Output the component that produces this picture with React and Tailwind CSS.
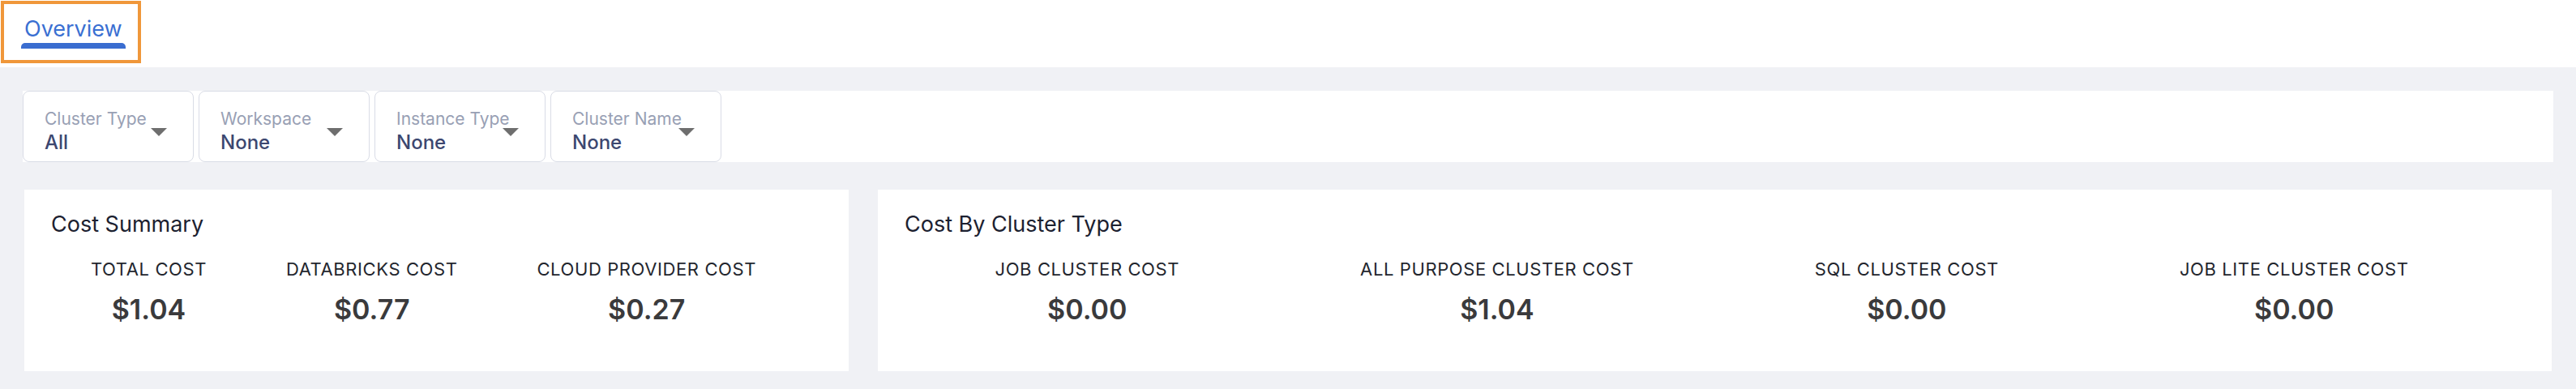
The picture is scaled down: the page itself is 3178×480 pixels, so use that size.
import React from 'react'

const filters = [
  { label: 'Cluster Type', value: 'All' },
  { label: 'Workspace', value: 'None' },
  { label: 'Instance Type', value: 'None' },
  { label: 'Cluster Name', value: 'None' },
]

const summary = [
  { label: 'TOTAL COST', value: '$1.04' },
  { label: 'DATABRICKS COST', value: '$0.77' },
  { label: 'CLOUD PROVIDER COST', value: '$0.27' },
]

const byCluster = [
  { label: 'JOB CLUSTER COST', value: '$0.00' },
  { label: 'ALL PURPOSE CLUSTER COST', value: '$1.04' },
  { label: 'SQL CLUSTER COST', value: '$0.00' },
  { label: 'JOB LITE CLUSTER COST', value: '$0.00' },
]

function FilterSelect({ label, value }) {
  return (
    <div className="w-[211px] h-[88px] border border-[#d9dce6] rounded-[8px] bg-white flex justify-between pl-[26px] pr-[32px] pt-[21px]">
      <div className="flex flex-col min-w-0">
        <span className="text-[21px] leading-[26px] text-[#98a0b4] whitespace-nowrap">{label}</span>
        <span className="text-[24px] leading-[28px] mt-[2px] text-[#3c4770] font-medium">{value}</span>
      </div>
      <span className="mt-[24px] w-0 h-0 border-l-[10px] border-r-[10px] border-t-[10px] border-l-transparent border-r-transparent border-t-[#6e6e6e] shrink-0" />
    </div>
  )
}

function CostCard({ title, items, className }) {
  return (
    <div className={`bg-white h-[224px] pl-[33px] pr-[31px] pt-[26px] ${className}`}>
      <h2 className="text-[27px] leading-[34px] text-[#1c2130]">{title}</h2>
      <div className="flex justify-around pr-[34px] mt-[24px]">
        {items.map((item) => (
          <div key={item.label} className="flex flex-col items-center">
            <span className="text-[22px] leading-[28px] tracking-[0.6px] text-[#23262e]">{item.label}</span>
            <span className="text-[34px] leading-[40px] mt-[16px] font-semibold text-[#3a3a3c]">{item.value}</span>
          </div>
        ))}
      </div>
    </div>
  )
}

export default function App() {
  return (
    <div className="min-h-screen bg-[#f0f1f5] font-['Inter',sans-serif]">
      {/* Tabs */}
      <div className="h-[83px] bg-white pt-px pl-px">
        <div className="w-[173px] h-[77px] border-4 border-[#f0973a] pt-[15px] pl-[21px]">
          <div className="inline-flex flex-col items-stretch">
            <span className="px-[4px] text-[27px] leading-[32px] text-[#3a6fd2]">Overview</span>
            <span className="mt-px h-[7px] rounded-t-[5px] bg-[#3a6dd0]" />
          </div>
        </div>
      </div>

      <div className="px-[28px] pt-[29px] pb-[24px]">
        {/* Filters */}
        <div className="bg-white flex gap-[6px]">
          {filters.map((f) => (
            <FilterSelect key={f.label} {...f} />
          ))}
        </div>

        {/* Cost cards */}
        <div className="flex gap-[36px] mt-[34px] px-[2px]">
          <CostCard title="Cost Summary" items={summary} className="w-[1017px] shrink-0" />
          <CostCard title="Cost By Cluster Type" items={byCluster} className="flex-1" />
        </div>
      </div>
    </div>
  )
}
